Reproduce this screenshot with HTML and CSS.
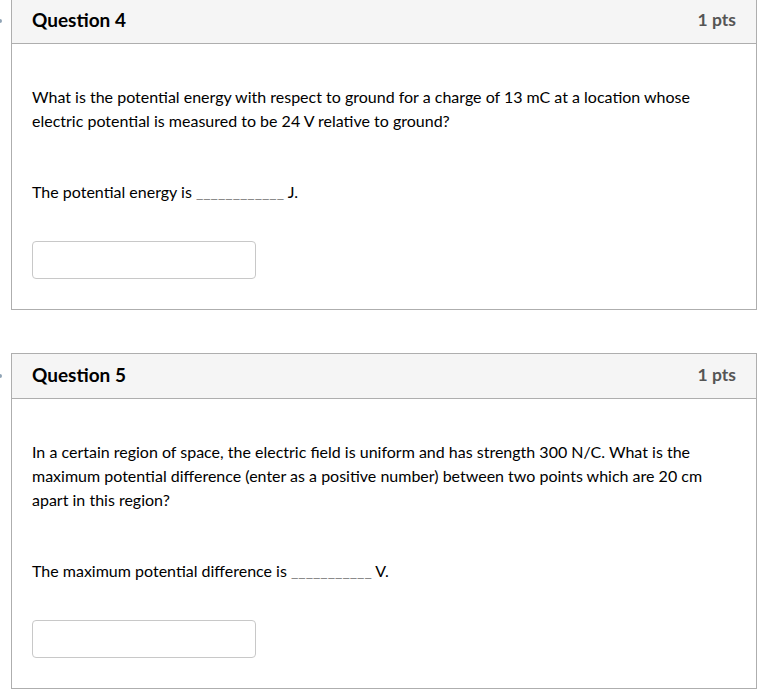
FILE: index.html
```html
<!DOCTYPE html>
<html>
<head>
<meta charset="utf-8">
<link rel="stylesheet" href="styles.css">
</head>
<body>
<div class="quiz">
  <div class="question">
    <div class="q-header">
      <span class="q-title">Question 4</span>
      <span class="q-pts">1 pts</span>
    </div>
    <div class="q-body">
      <p class="q-text">What is the potential energy with respect to ground for a charge of 13 mC at a location whose electric potential is measured to be 24 V relative to ground?</p>
      <p class="q-answer">The potential energy is <span class="blank">____________</span> J.</p>
      <input class="q-input" type="text">
    </div>
  </div>
  <div class="question">
    <div class="q-header">
      <span class="q-title">Question 5</span>
      <span class="q-pts">1 pts</span>
    </div>
    <div class="q-body">
      <p class="q-text">In a certain region of space, the electric field is uniform and has strength 300 N/C. What is the maximum potential difference (enter as a positive number) between two points which are 20 cm apart in this region?</p>
      <p class="q-answer">The maximum potential difference is <span class="blank">___________</span> V.</p>
      <input class="q-input" type="text">
    </div>
  </div>
</div>
</body>
</html>
```
FILE: styles.css
```css
html, body {
  margin: 0;
  padding: 0;
  background: #fff;
}
body {
  font-family: Lato, "Open Sans", sans-serif;
  color: #2d3b45;
}
.quiz {
  display: flex;
  flex-direction: column;
  gap: 43px;
  margin-top: -2px;
  padding-left: 11px;
}
.question {
  position: relative;
  width: 746px;
  box-sizing: border-box;
  border: 1px solid #aeaeae;
}
.question::before {
  content: "";
  position: absolute;
  left: -14px;
  top: 20px;
  width: 4px;
  height: 4px;
  border-radius: 50%;
  background: #8fa3b5;
}
.q-header {
  height: 41px;
  display: flex;
  align-items: center;
  justify-content: space-between;
  padding: 0 20px 3px 20px;
  background: #f5f5f5;
  border-bottom: 1px solid #aeaeae;
}
.q-title {
  font-size: 19px;
  font-weight: 700;
  color: #000;
}
.q-pts {
  font-size: 17.5px;
  font-weight: 700;
  color: #555;
}
.q-body {
  padding: 41px 20px 30px 20px;
}
.q-body p {
  margin: 0;
  font-size: 16px;
  line-height: 24px;
  color: #000;
}
.q-text {
  margin-bottom: 47px !important;
}
.q-answer {
  margin-bottom: 37px !important;
}
.blank {
  color: #8a8a8a;
}
.q-input {
  display: block;
  width: 224px;
  height: 38px;
  box-sizing: border-box;
  border: 1px solid #c8c8c8;
  border-radius: 4px;
  background: #fff;
  margin: 0;
  padding: 0;
}
```
